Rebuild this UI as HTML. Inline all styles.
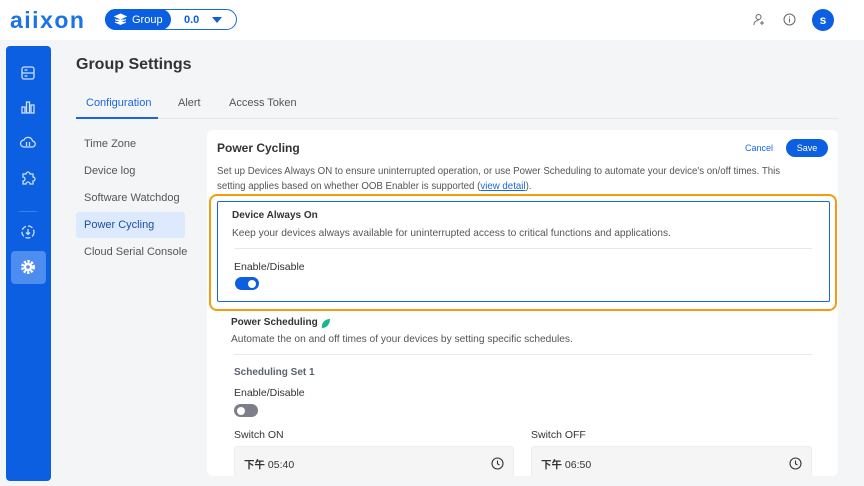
<!DOCTYPE html>
<html><head><meta charset="utf-8"><style>
*{box-sizing:border-box;margin:0;padding:0}
body{width:864px;height:486px;overflow:hidden;background:#f4f5f7;font-family:"Liberation Sans","Noto Sans CJK SC",sans-serif;position:relative;color:#333}
.abs{position:absolute}
.top{left:0;top:0;width:864px;height:40px;background:#fff}
.side{left:6px;top:46px;width:45px;height:435px;background:#0b5fe0;border-radius:4px}
.ic{position:absolute;left:13px;width:18px;height:18px}
.card{left:207px;top:130px;width:631px;height:346px;background:#fff;border-radius:6px}
.t{position:absolute;white-space:nowrap}
.tog{position:absolute;width:24px;height:13px;border-radius:7px}
.tog i{position:absolute;top:2.5px;width:8px;height:8px;border-radius:50%;background:#fff}
.inp{position:absolute;height:34px;background:#f5f5f6;border-radius:3px;border:1px solid #eee}
</style></head><body>
<div class="abs top"></div>
<div class="t" style="left:10px;top:7px;font-size:23px;font-weight:bold;color:#1a73e8;letter-spacing:1.5px">aiixon</div>
<div class="abs" style="left:105px;top:9px;width:132px;height:21px;border:1px solid #1a66e0;border-radius:11px"></div>
<div class="abs" style="left:105px;top:9px;width:66px;height:21px;background:#0b5fe0;border-radius:11px"></div>
<svg class="abs" style="left:114px;top:13px" width="13" height="13" viewBox="0 0 13 13"><path d="M6.5 1L12 3.5 6.5 6 1 3.5Z M1 6.5l5.5 2.5 5.5-2.5 M1 9l5.5 2.5L12 9" fill="#fff" stroke="#fff" stroke-width="1"/></svg>
<div class="t" style="left:132px;top:14px;font-size:11px;color:#fff">Group</div>
<div class="t" style="left:184px;top:14px;font-size:11px;color:#0b5fe0;font-weight:bold">0.0</div>
<svg class="abs" style="left:212px;top:17px" width="10" height="6"><path d="M0 0h10L5 6z" fill="#0b5fe0"/></svg>
<svg class="abs" style="left:753px;top:13px" width="13" height="13" viewBox="0 0 13 13" fill="none" stroke="#666" stroke-width="1"><circle cx="5.5" cy="4" r="2.5"/><path d="M1 12c0-3 2-4.5 4.5-4.5 M9 8v4M7 10h4"/></svg>
<svg class="abs" style="left:783px;top:13px" width="13" height="13" viewBox="0 0 13 13" fill="none" stroke="#666" stroke-width="1"><circle cx="6.5" cy="6.5" r="5.5"/><path d="M6.5 5.5v4M6.5 3.5v1"/></svg>
<div class="abs" style="left:812px;top:9px;width:22px;height:22px;border-radius:50%;background:#0b5fe0;color:#fff;font-weight:bold;font-size:12px;text-align:center;line-height:22px">s</div>

<div class="abs side">
<svg class="ic" style="top:18px" viewBox="0 0 18 18" fill="none" stroke="#cfe0ff" stroke-width="1.3"><rect x="3" y="3" width="12" height="12" rx="2"/><path d="M3 9h12M5.5 6h3M5.5 12h3"/></svg>
<svg class="ic" style="top:52px" viewBox="0 0 18 18" fill="none" stroke="#cfe0ff" stroke-width="1.3"><rect x="3" y="9" width="3" height="6"/><rect x="7.5" y="4" width="3" height="11"/><rect x="12" y="7" width="3" height="8"/></svg>
<svg class="ic" style="top:87px" viewBox="0 0 18 18" fill="none" stroke="#cfe0ff" stroke-width="1.3"><path d="M5 14a3.5 3.5 0 0 1 0-7 4.5 4.5 0 0 1 8.5 1A3 3 0 0 1 13 14z M7.5 9v4M10.5 13V9"/></svg>
<svg class="ic" style="top:122px" viewBox="0 0 18 18" fill="none" stroke="#cfe0ff" stroke-width="1.3"><path d="M4 6h3a2 2 0 1 1 4 0h3v3a2 2 0 1 1 0 4v3h-3a2 2 0 1 0-4 0H4v-3a2 2 0 1 0 0-4z"/></svg>
<div class="abs" style="left:13px;top:165px;width:18px;height:1px;background:#3a80ea"></div>
<svg class="ic" style="top:177px" viewBox="0 0 18 18" fill="none" stroke="#cfe0ff" stroke-width="1.3"><circle cx="9" cy="9" r="6" stroke-dasharray="5 2"/><path d="M9 6v5M7 9.5l2 2 2-2"/></svg>
<div class="abs" style="left:5px;top:205px;width:35px;height:33px;background:#4d8df0;border-radius:4px"></div>
<svg class="ic" style="top:212px" viewBox="0 0 18 18"><circle cx="9" cy="9" r="5.5" fill="none" stroke="#fff" stroke-width="3" stroke-dasharray="2.2 1.4"/><circle cx="9" cy="9" r="4.2" fill="#fff"/><circle cx="9" cy="9" r="1.8" fill="#4d8df0"/></svg>
</div>

<div class="t" style="left:76px;top:56px;font-size:16px;font-weight:bold;color:#333">Group Settings</div>
<div class="t" style="left:86px;top:97px;font-size:11px;color:#1a66e0">Configuration</div>
<div class="t" style="left:178px;top:97px;font-size:11px;color:#555">Alert</div>
<div class="t" style="left:229px;top:97px;font-size:11px;color:#555">Access Token</div>
<div class="abs" style="left:76px;top:118px;width:762px;height:1px;background:#e6e6e6"></div>
<div class="abs" style="left:76px;top:117px;width:82px;height:2px;background:#1a66e0"></div>

<div class="t" style="left:84px;top:138px;font-size:11px;color:#555">Time Zone</div>
<div class="t" style="left:84px;top:165px;font-size:11px;color:#555">Device log</div>
<div class="t" style="left:84px;top:192px;font-size:11px;color:#555">Software Watchdog</div>
<div class="abs" style="left:76px;top:212px;width:109px;height:26px;background:#dde9fc;border-radius:3px"></div>
<div class="t" style="left:84px;top:219px;font-size:11px;color:#1c4fa8">Power Cycling</div>
<div class="t" style="left:84px;top:246px;font-size:11px;color:#555">Cloud Serial Console</div>

<div class="abs card"></div>
<div class="t" style="left:217px;top:141px;font-size:12px;font-weight:bold;color:#333">Power Cycling</div>
<div class="t" style="left:745px;top:143px;font-size:9px;color:#1a66e0">Cancel</div>
<div class="abs" style="left:786px;top:139px;width:42px;height:18px;background:#0b5fe0;border-radius:9px;color:#fff;font-size:9px;text-align:center;line-height:18px">Save</div>
<div class="t" style="left:217px;top:164px;font-size:9.7px;color:#555;line-height:15px">Set up Devices Always ON to ensure uninterrupted operation, or use Power Scheduling to automate your device's on/off times. This<br>setting applies based on whether OOB Enabler is supported (<span style="color:#1a66e0;text-decoration:underline">view detail</span>).</div>

<div class="abs" style="left:209px;top:194px;width:628px;height:117px;border:2px solid #f39c12;border-radius:8px"></div>
<div class="abs" style="left:217px;top:201px;width:613px;height:101px;border:1.5px solid #1a66e0;border-radius:2px"></div>
<div class="t" style="left:232px;top:210px;font-size:10px;font-weight:bold;color:#333">Device Always On</div>
<div class="t" style="left:232px;top:228px;font-size:10.2px;color:#555">Keep your devices always available for uninterrupted access to critical functions and applications.</div>
<div class="abs" style="left:234px;top:248px;width:578px;height:1px;background:#e8e8e8"></div>
<div class="t" style="left:234px;top:261px;font-size:10.5px;color:#333">Enable/Disable</div>
<div class="tog" style="left:235px;top:277px;background:#0b5fe0"><i style="left:13px"></i></div>

<div class="t" style="left:231px;top:317px;font-size:10px;font-weight:bold;color:#333">Power Scheduling</div>
<svg class="abs" style="left:320px;top:318px" width="11" height="11" viewBox="0 0 11 11"><path d="M2 10C1 5 5 1 10 1 10 6 7 10 2 10z" fill="#17b890"/></svg>
<div class="t" style="left:231px;top:334px;font-size:10.2px;color:#555">Automate the on and off times of your devices by setting specific schedules.</div>
<div class="abs" style="left:234px;top:354px;width:578px;height:1px;background:#e8e8e8"></div>
<div class="t" style="left:234px;top:367px;font-size:10px;font-weight:bold;color:#5a6270">Scheduling Set 1</div>
<div class="t" style="left:234px;top:387px;font-size:10.5px;color:#333">Enable/Disable</div>
<div class="tog" style="left:234px;top:404px;background:#7c7f8a"><i style="left:3px"></i></div>
<div class="t" style="left:234px;top:429px;font-size:10.5px;color:#333">Switch ON</div>
<div class="t" style="left:531px;top:429px;font-size:10.5px;color:#333">Switch OFF</div>
<div class="inp" style="left:234px;top:446px;width:280px"></div>
<div class="inp" style="left:531px;top:446px;width:281px"></div>
<div class="t" style="left:244px;top:457px;font-size:10.5px;color:#333"><b>下午</b> 05:40</div>
<div class="t" style="left:541px;top:457px;font-size:10.5px;color:#333"><b>下午</b> 06:50</div>
<svg class="abs" style="left:491px;top:457px" width="13" height="13" viewBox="0 0 13 13" fill="none" stroke="#333" stroke-width="1.1"><circle cx="6.5" cy="6.5" r="5.5"/><path d="M6.5 3.5v3.3l2 1.2"/></svg>
<svg class="abs" style="left:789px;top:457px" width="13" height="13" viewBox="0 0 13 13" fill="none" stroke="#333" stroke-width="1.1"><circle cx="6.5" cy="6.5" r="5.5"/><path d="M6.5 3.5v3.3l2 1.2"/></svg>
<div class="abs" style="left:0;top:476px;width:864px;height:10px;background:#f4f5f7"></div>
<div class="abs" style="left:6px;top:476px;width:45px;height:5px;background:#0b5fe0;border-radius:0 0 4px 4px"></div>
</body></html>
